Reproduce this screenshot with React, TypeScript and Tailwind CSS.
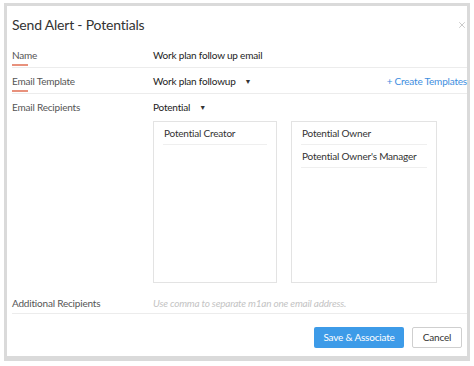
import { X } from "lucide-react"

const font = { fontFamily: "Lato, 'Open Sans', sans-serif" }

function Caret() {
  return <span className="ml-[9px] text-[7px] text-[#333]">▼</span>
}

function Row({ label, mark, children }: { label: string; mark?: boolean; children: React.ReactNode }) {
  return (
    <div className="ml-[5px] flex h-[25px] items-center border-b border-[#ececec]">
      <div className="relative w-[141px] text-[#555]">
        {label}
        {mark && <span className="absolute left-0 top-[16px] h-[2px] w-[16px] bg-[#e8917c]" />}
      </div>
      <div className="flex flex-1 items-center text-[#222]">{children}</div>
    </div>
  )
}

function Box({ items, width }: { items: string[]; width: string }) {
  return (
    <div className={`h-[162px] border border-[#e3e3e3] ${width}`}>
      {items.map((it) => (
        <div key={it} className="mx-[9px] flex h-[23px] items-center whitespace-nowrap border-b border-[#efefef] pl-[1px] text-[#333]">
          {it}
        </div>
      ))}
    </div>
  )
}

export default function App() {
  return (
    <div className="h-[366px] w-[474px] bg-white pl-[4px] pt-[3px] text-[10px] tracking-[-0.2px]" style={font}>
      <div className="h-[358px] w-[466px] border-[3px] border-b-[5px] border-[#dadada] bg-white">
        <div className="flex h-[37px] items-center justify-between pl-[5px] pr-0">
          <h1 className="text-[14px] tracking-[-0.2px] text-[#333]">Send Alert - Potentials</h1>
          <X className="h-[10px] w-[10px] text-[#aaa]" strokeWidth={1.5} />
        </div>

        <Row label="Name" mark>
          Work plan follow up email
        </Row>
        <div className="h-[1px]" />
        <Row label="Email Template" mark>
          Work plan followup
          <Caret />
          <span className="ml-auto text-[#3d8ee0]">+ Create Templates</span>
        </Row>

        <div className="ml-[5px] pt-[6px]">
          <div className="flex h-[14px] items-center">
            <div className="w-[141px] text-[#555]">Email Recipients</div>
            <div className="flex items-center text-[#222]">
              Potential
              <Caret />
            </div>
          </div>
          <div className="ml-[141px] mt-[7px] flex gap-[14px]">
            <Box items={["Potential Creator"]} width="w-[124px]" />
            <Box items={["Potential Owner", "Potential Owner's Manager"]} width="w-[146px]" />
          </div>
        </div>

        <div className="ml-[5px] mt-[10px] flex h-[21px] items-center border-b border-[#ececec]">
          <div className="w-[141px] text-[#555]">Additional Recipients</div>
          <div className="italic text-[#c4c4c4]">Use comma to separate m1an one email address.</div>
        </div>

        <div className="flex justify-end gap-[8px] pr-[5px] pt-[13px]">
          <button className="h-[21px] w-[90px] rounded-[2px] bg-[#3d9be8] text-white">Save &amp; Associate</button>
          <button className="h-[21px] w-[50px] rounded-[2px] border border-[#cfcfcf] bg-white text-[#333]">Cancel</button>
        </div>
      </div>
    </div>
  )
}
